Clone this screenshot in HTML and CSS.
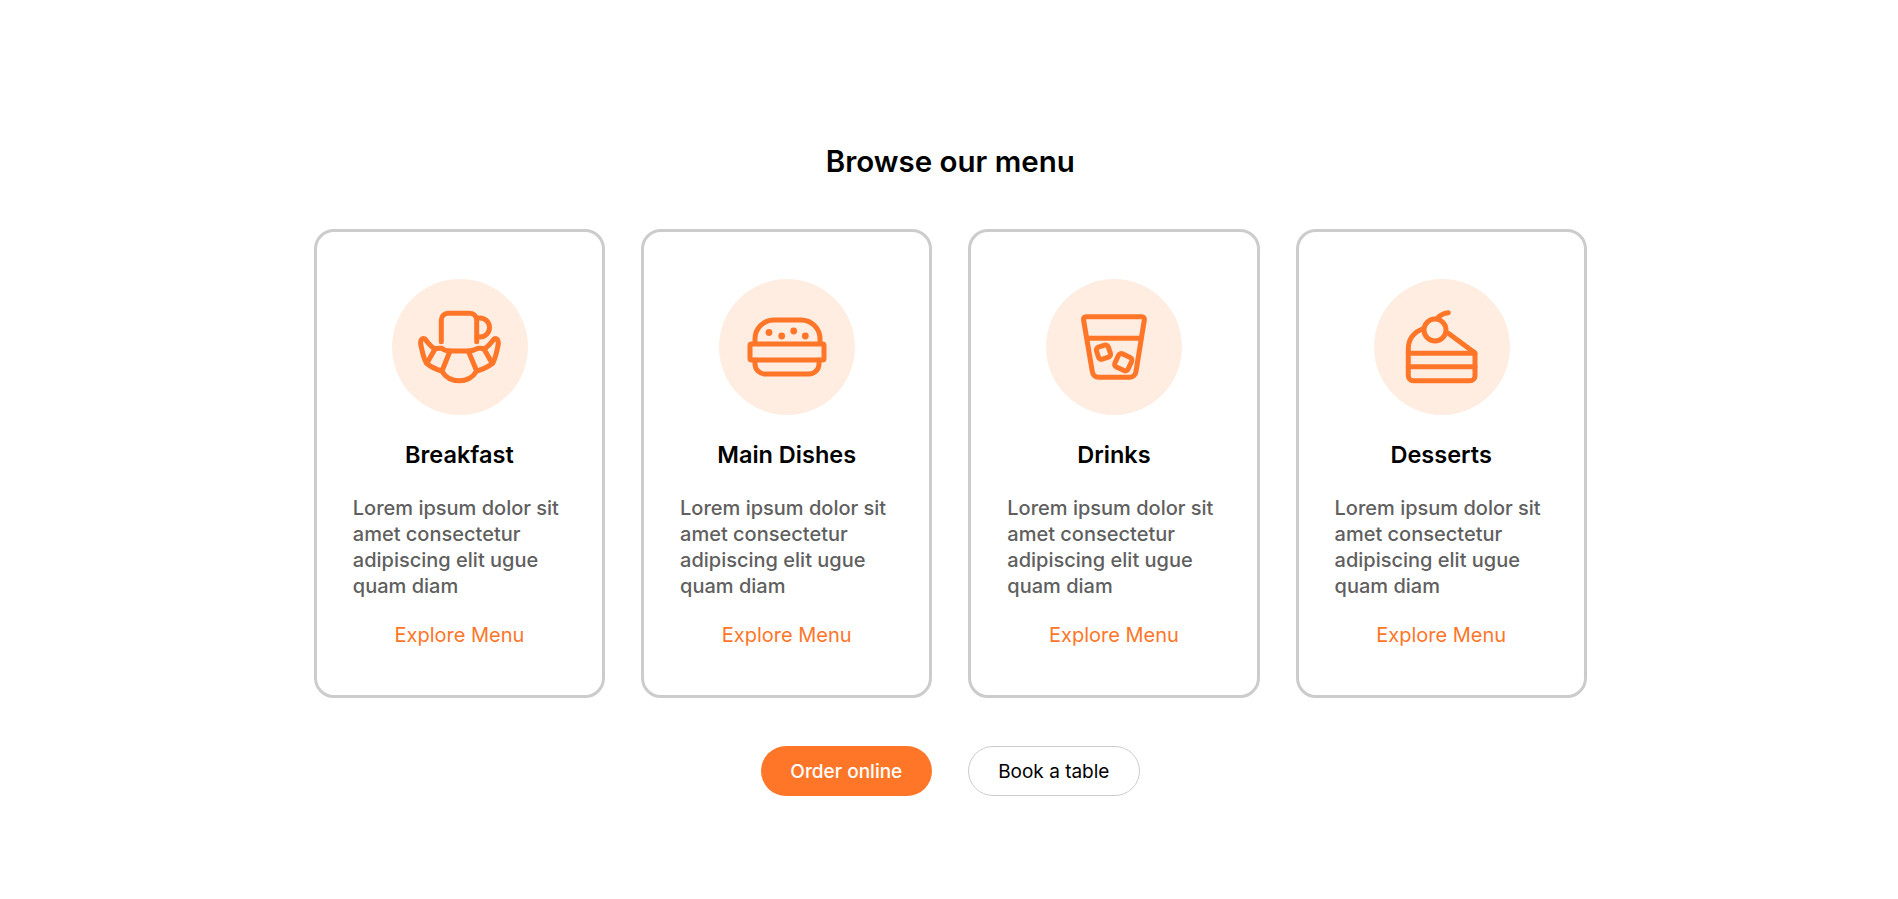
FILE: index.html
```html
<!DOCTYPE html>
<html lang="en">
<head>
<meta charset="utf-8">
<title>Browse our menu</title>
<link rel="stylesheet" href="styles.css">
</head>
<body>
<main class="menu">
  <h1 class="menu-title">Browse our menu</h1>
  <div class="cards">
    <article class="card">
      <div class="icon-circle">
        <svg class="icon" viewBox="0 0 136 136">
          <path d="M49.3 62.7V41a6.7 6.7 0 0 1 6.7-6.7h22a6.7 6.7 0 0 1 6.7 6.7v21.7"/>
          <path d="M85 39h3a9.5 9.5 0 0 1 0 19h-3"/>
          <path d="M33 60C29.5 58 27.5 62 29.3 68C30.5 74 32 80 34.5 84.3C39 88 44 90.5 49.7 92A20.5 20.5 0 0 0 84.7 92C90.5 90.5 96 88 100.7 84.3C103 80 104.5 74 105.7 68C107.5 62 105 58 102 60C99 64 96 68 92 70C90 69 88 69 86.3 69.3C83 71 80 72 76.3 72H58C54.5 72 51.5 71 49.7 69.3C47 69 45 69 43 70C39 68 36 64 33 60Z"/>
          <path d="M58 72L50 92M76.3 72L84.7 92M43 70L35 84M92 70L100 84"/>
        </svg>
      </div>
      <h2 class="card-title">Breakfast</h2>
      <p class="card-text">Lorem ipsum dolor sit amet consectetur adipiscing elit ugue quam diam</p>
      <a class="card-link" href="#">Explore Menu</a>
    </article>
    <article class="card">
      <div class="icon-circle">
        <svg class="icon" viewBox="0 0 136 136">
          <path d="M36 64.5V60A19 19 0 0 1 55 41H82A19 19 0 0 1 101 60V64.5"/>
          <rect x="31" y="65" width="74" height="16" rx="1.5"/>
          <path d="M36 81V85A10 10 0 0 0 46 95H90A10 10 0 0 0 100 85V81"/>
          <circle class="dot" cx="50" cy="53.5" r="3.4"/>
          <circle class="dot" cx="62.7" cy="57" r="3.4"/>
          <circle class="dot" cx="74.7" cy="52" r="3.4"/>
          <circle class="dot" cx="86.3" cy="57" r="3.4"/>
        </svg>
      </div>
      <h2 class="card-title">Main Dishes</h2>
      <p class="card-text">Lorem ipsum dolor sit amet consectetur adipiscing elit ugue quam diam</p>
      <a class="card-link" href="#">Explore Menu</a>
    </article>
    <article class="card">
      <div class="icon-circle">
        <svg class="icon" viewBox="0 0 136 136">
          <path d="M40 37.7H96A2.5 2.5 0 0 1 98.4 40.5L90 92.5A6.5 6.5 0 0 1 84 98.3H52.5A6.5 6.5 0 0 1 46.3 92.5L37.5 40.5A2.5 2.5 0 0 1 40 37.7Z"/>
          <path d="M41.5 59.3H94.5"/>
          <rect x="51.2" y="66.9" width="12.5" height="12.5" rx="3" transform="rotate(-18 57.4 73.1)"/>
          <rect x="70" y="76" width="14.5" height="14.5" rx="3" transform="rotate(25 77.3 83.3)"/>
        </svg>
      </div>
      <h2 class="card-title">Drinks</h2>
      <p class="card-text">Lorem ipsum dolor sit amet consectetur adipiscing elit ugue quam diam</p>
      <a class="card-link" href="#">Explore Menu</a>
    </article>
    <article class="card">
      <div class="icon-circle">
        <svg class="icon" viewBox="0 0 136 136">
          <circle cx="61" cy="51" r="11"/>
          <path d="M63.3 39.3C66 36 70 34.3 74.3 33.7"/>
          <path d="M74.3 54.3L99 72.5A4 4 0 0 1 101 76V96.7A5 5 0 0 1 96 101.7H39.3A5 5 0 0 1 34.3 96.7V70C34.3 60 40 53 49.5 49.5"/>
          <path d="M34.3 74.3H101M34.3 87.7H101"/>
        </svg>
      </div>
      <h2 class="card-title">Desserts</h2>
      <p class="card-text">Lorem ipsum dolor sit amet consectetur adipiscing elit ugue quam diam</p>
      <a class="card-link" href="#">Explore Menu</a>
    </article>
  </div>
  <div class="actions">
    <a class="btn btn-primary" href="#">Order online</a>
    <a class="btn btn-outline" href="#">Book a table</a>
  </div>
</main>
</body>
</html>
```
FILE: styles.css
```css
* { box-sizing: border-box; }
html, body { margin: 0; padding: 0; }
body {
  background: #fff;
  color: #000;
  font-family: "Inter", "Noto Sans", "Liberation Sans", sans-serif;
}
.menu {
  width: 1273px;
  margin-left: 313.8px;
  padding-top: 143px;
}
.menu-title {
  margin: 0 0 50px;
  font-size: 29.5px;
  line-height: 36px;
  font-weight: 600;
  text-align: center;
}
.cards {
  display: grid;
  grid-template-columns: repeat(4, 1fr);
  gap: 36px;
}
.card {
  height: 469px;
  border: 3px solid #ccc;
  border-radius: 20px;
  padding: 47px 36px 0;
  display: flex;
  flex-direction: column;
}
.icon-circle {
  width: 136px;
  height: 136px;
  margin-left: 0.8px;
  border-radius: 50%;
  background: #ffede2;
  align-self: center;
  flex: none;
}
.icon {
  display: block;
  width: 136px;
  height: 136px;
  fill: none;
  stroke: #ff7629;
  stroke-width: 5;
  stroke-linecap: round;
  stroke-linejoin: round;
}
.icon .dot { fill: #ff7629; stroke: none; }
.card-title {
  margin: 25px 0 0;
  font-size: 23.5px;
  line-height: 30px;
  font-weight: 600;
  text-align: center;
}
.card-text {
  margin: 25px 0 0;
  font-size: 20px;
  line-height: 26px;
  font-weight: 450;
  color: #5f5f5f;
}
.card-link {
  margin-top: 23px;
  font-size: 20px;
  line-height: 26px;
  font-weight: 400;
  color: #ff7629;
  text-align: center;
  text-decoration: none;
}
.actions {
  display: flex;
  justify-content: center;
  gap: 36px;
  margin-top: 48px;
}
.btn {
  height: 50px;
  border-radius: 25px;
  display: flex;
  align-items: center;
  justify-content: center;
  font-size: 19px;
  text-decoration: none;
}
.btn-primary { width: 171px; background: #ff7629; color: #fff; font-weight: 500; }
.btn-outline { width: 172px; background: #fff; color: #000; border: 1px solid #ccc; font-weight: 400; }
```
